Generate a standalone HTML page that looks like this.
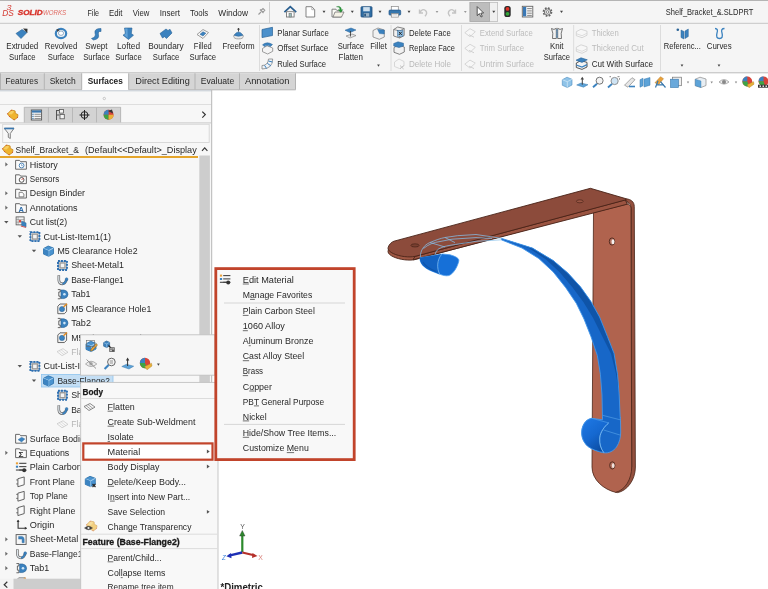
<!DOCTYPE html>
<html><head><meta charset="utf-8"><title>SOLIDWORKS - Shelf_Bracket_&amp;.SLDPRT</title>
<style>html,body{margin:0;padding:0;background:#fff;overflow:hidden}svg{display:block;filter:blur(0.4px)}text{font-family:"Liberation Sans",sans-serif;}</style>
</head><body>
<svg width="768" height="589" viewBox="0 0 768 589">
<rect x="0" y="0" width="768" height="589" fill="#ffffff" />
<rect x="0" y="0" width="768" height="73" fill="#f5f5f5" />
<line x1="0" y1="0.5" x2="768" y2="0.5" stroke="#b4b4b4" stroke-width="1"/>
<line x1="0" y1="23.3" x2="768" y2="23.3" stroke="#c6c6c6" stroke-width="1"/>
<line x1="0" y1="72.8" x2="768" y2="72.8" stroke="#bdbdbd" stroke-width="1"/>
<line x1="269.5" y1="2" x2="269.5" y2="23" stroke="#cfcfcf" stroke-width="1"/>
<text x="2.3" y="16.0" font-size="8.8" fill="#d43a32" textLength="11.5" lengthAdjust="spacingAndGlyphs" font-style="italic">DS</text>
<text x="6.6" y="9.6" font-size="7.6" fill="#d43a32" textLength="5.0" lengthAdjust="spacingAndGlyphs" font-style="italic">3</text>
<text x="17.7" y="14.7" font-size="7.7" fill="#d8322a" font-weight="bold" textLength="25.0" lengthAdjust="spacingAndGlyphs" font-style="italic" stroke="#d8322a" stroke-width="0.35">SOLID</text>
<text x="43.0" y="14.7" font-size="7.7" fill="#e06a62" textLength="23.2" lengthAdjust="spacingAndGlyphs" font-style="italic">WORKS</text>
<text x="87.5" y="16.0" font-size="8.8" fill="#282828" textLength="11.5" lengthAdjust="spacingAndGlyphs" >File</text>
<text x="109.0" y="16.0" font-size="8.8" fill="#282828" textLength="13.5" lengthAdjust="spacingAndGlyphs" >Edit</text>
<text x="132.7" y="16.0" font-size="8.8" fill="#282828" textLength="16.6" lengthAdjust="spacingAndGlyphs" >View</text>
<text x="159.7" y="16.0" font-size="8.8" fill="#282828" textLength="20.3" lengthAdjust="spacingAndGlyphs" >Insert</text>
<text x="190.0" y="16.0" font-size="8.8" fill="#282828" textLength="18.3" lengthAdjust="spacingAndGlyphs" >Tools</text>
<text x="218.3" y="16.0" font-size="8.8" fill="#282828" textLength="29.7" lengthAdjust="spacingAndGlyphs" >Window</text>
<path d="M258.5,14.5 L261,12 M260,9.5 L263.5,13 M261,10.5 L263,8.5 L264.8,10.3 L262.8,12.3" fill="none" stroke="#999" stroke-width="1.1" />
<path d="M284.4,12.2 L290.3,6.7 L296.2,12.2" fill="none" stroke="#2a5f90" stroke-width="1.8" />
<rect x="286.5" y="11.7" width="7.6" height="5.3" fill="#fdfdfd" stroke="#777" stroke-width="0.9" />
<rect x="289.0" y="13.3" width="2.6" height="3.7" fill="#9bb" stroke="#666" stroke-width="0.5" />
<path d="M306,6.7 L311.8,6.7 L314.7,9.7 L314.7,17.0 L306,17.0 Z" fill="#ffffff" stroke="#777" stroke-width="0.9" />
<path d="M311.8,6.7 L311.8,9.7 L314.7,9.7" fill="none" stroke="#999" stroke-width="0.7" />
<path d="M322.5,10.85 L325.5,10.85 L324,13.1 Z" fill="#444" />
<path d="M332,9.2 L336,9.2 L337,10.7 L341.5,10.7 L341.5,17.0 L332,17.0 Z" fill="#fbfbf6" stroke="#777" stroke-width="0.9" />
<path d="M333,17.0 L335,12.0 L344,12.0 L341.5,17.0 Z" fill="#f4f1e6" stroke="#777" stroke-width="0.8" />
<path d="M336.5,6.7 Q340,6.2 340,9.7 L338.3,9.7 L340.6,12.3 L342.8,9.7 L341.3,9.7 Q341.3,5.5 336.5,6.7 Z" fill="#2a9a3a" stroke="#1d7a2a" stroke-width="0.4" />
<path d="M350.8,10.85 L353.8,10.85 L352.3,13.1 Z" fill="#444" />
<rect x="361" y="6.7" width="11" height="10.3" fill="#2f6ea5" stroke="#1f4d7a" stroke-width="0.8" rx="0.8"/>
<rect x="363.2" y="7.1000000000000005" width="6.6" height="4.2" fill="#cfe0ee" />
<rect x="363.5" y="12.9" width="6" height="4" fill="#9ab4c9" stroke="#1f4d7a" stroke-width="0.4" />
<rect x="364.3" y="13.7" width="1.6" height="2.6" fill="#1f4d7a" />
<path d="M378.5,10.85 L381.5,10.85 L380,13.1 Z" fill="#444" />
<rect x="391.3" y="6.5" width="7" height="4" fill="#ffffff" stroke="#888" stroke-width="0.7" />
<rect x="389" y="10.1" width="11.7" height="5" fill="#3576ad" stroke="#25588a" stroke-width="0.7" rx="1"/>
<rect x="391.3" y="13.5" width="7" height="3.6" fill="#ffffff" stroke="#888" stroke-width="0.7" />
<line x1="392.3" y1="14.9" x2="397.3" y2="14.9" stroke="#999" stroke-width="0.6"/>
<path d="M407.5,10.85 L410.5,10.85 L409,13.1 Z" fill="#444" />
<path d="M419.5,9.5 L419.5,13 L423,13 M419.7,12.8 Q422,8 425.5,10.5 Q428,13 425,16.2" fill="none" stroke="#c4c4c4" stroke-width="1.4" />
<path d="M435.6,10.9 L438.4,10.9 L437,13.0 Z" fill="#999" />
<path d="M455.5,9.5 L455.5,13 L452,13 M455.3,12.8 Q453,8 449.5,10.5 Q447,13 450,16.2" fill="none" stroke="#c4c4c4" stroke-width="1.4" />
<path d="M463.90000000000003,10.9 L466.7,10.9 L465.3,13.0 Z" fill="#999" />
<rect x="470" y="2.5" width="27.6" height="19" fill="#f0f0f0" stroke="#bdbdbd" stroke-width="0.8" />
<rect x="470" y="2.5" width="19.6" height="19" fill="#bdbdbd" stroke="#ababab" stroke-width="0.8" />
<path d="M477.2,6.6 L477.2,15.6 L479.4,13.6 L481,17 L482.3,16.4 L480.8,13.1 L483.6,13 Z" fill="#ffffff" stroke="#333" stroke-width="0.8" />
<path d="M492.3,10.85 L495.3,10.85 L493.8,13.1 Z" fill="#444" />
<rect x="504.3" y="6" width="6.4" height="11" fill="#2a2a2a" rx="2.6"/>
<circle cx="507.5" cy="8.9" r="1.9" fill="#e03328"/><circle cx="507.5" cy="13.8" r="1.9" fill="#35a53a"/>
<rect x="522.3" y="6.3" width="10.5" height="10.7" fill="#f8f8f8" stroke="#666" stroke-width="0.9" />
<rect x="523" y="7" width="3.2" height="9.3" fill="#3a78b5" />
<line x1="527.2" y1="8.6" x2="531.8" y2="8.6" stroke="#666" stroke-width="0.8"/>
<line x1="527.2" y1="10.9" x2="531.8" y2="10.9" stroke="#666" stroke-width="0.8"/>
<line x1="527.2" y1="13.2" x2="531.8" y2="13.2" stroke="#666" stroke-width="0.8"/>
<line x1="527.2" y1="15.4" x2="531.8" y2="15.4" stroke="#666" stroke-width="0.8"/>
<circle cx="547.5" cy="12" r="3.9" fill="none" stroke="#666" stroke-width="1.9" stroke-dasharray="1.7 1.36"/><circle cx="547.5" cy="12" r="3.1" fill="#f5f5f5" stroke="#666" stroke-width="0.9"/><circle cx="547.5" cy="12" r="1.4" fill="none" stroke="#666" stroke-width="0.8"/>
<path d="M560.0,10.85 L563.0,10.85 L561.5,13.1 Z" fill="#444" />
<text x="665.8" y="15.3" font-size="8.8" fill="#282828" textLength="87.5" lengthAdjust="spacingAndGlyphs" >Shelf_Bracket_&amp;.SLDPRT</text>
<text x="6.3" y="48.8" font-size="8.8" fill="#282828" textLength="32.0" lengthAdjust="spacingAndGlyphs" >Extruded</text>
<text x="9.1" y="60.1" font-size="8.8" fill="#282828" textLength="26.5" lengthAdjust="spacingAndGlyphs" >Surface</text>
<text x="44.8" y="48.8" font-size="8.8" fill="#282828" textLength="32.5" lengthAdjust="spacingAndGlyphs" >Revolved</text>
<text x="47.8" y="60.1" font-size="8.8" fill="#282828" textLength="26.5" lengthAdjust="spacingAndGlyphs" >Surface</text>
<text x="85.3" y="48.8" font-size="8.8" fill="#282828" textLength="22.2" lengthAdjust="spacingAndGlyphs" >Swept</text>
<text x="83.2" y="60.1" font-size="8.8" fill="#282828" textLength="26.5" lengthAdjust="spacingAndGlyphs" >Surface</text>
<text x="117.0" y="48.8" font-size="8.8" fill="#282828" textLength="23.0" lengthAdjust="spacingAndGlyphs" >Lofted</text>
<text x="115.2" y="60.1" font-size="8.8" fill="#282828" textLength="26.5" lengthAdjust="spacingAndGlyphs" >Surface</text>
<text x="148.2" y="48.8" font-size="8.8" fill="#282828" textLength="35.5" lengthAdjust="spacingAndGlyphs" >Boundary</text>
<text x="152.8" y="60.1" font-size="8.8" fill="#282828" textLength="26.5" lengthAdjust="spacingAndGlyphs" >Surface</text>
<text x="193.8" y="48.8" font-size="8.8" fill="#282828" textLength="18.0" lengthAdjust="spacingAndGlyphs" >Filled</text>
<text x="189.6" y="60.1" font-size="8.8" fill="#282828" textLength="26.5" lengthAdjust="spacingAndGlyphs" >Surface</text>
<text x="222.5" y="48.8" font-size="8.8" fill="#282828" textLength="32.2" lengthAdjust="spacingAndGlyphs" >Freeform</text>
<path d="M16,33.5 L22,29.5 L27,32.5 L21,38.5 Z" fill="#3b82bf" stroke="#2a6396" stroke-width="0.6" />
<path d="M23,28.5 L27.5,28.8 L27.3,33.0 Z" fill="#333" />
<ellipse cx="61.0" cy="33.5" rx="5.2" ry="4.6" fill="none" stroke="#3b82bf" stroke-width="2.2"/>
<ellipse cx="61.0" cy="33.2" rx="2.6" ry="2.2" fill="#fff" stroke="#2a6396" stroke-width="0.5"/>
<path d="M56.5,29 L60.0,29.5 L57.5,32 Z" fill="#444" />
<path d="M91.5,38.5 Q96.5,37 95.0,33 Q94.0,28.5 101.0,28.5 L101.0,31.5 Q97.5,31 98.5,34.5 Q99.5,39 93.5,40 Z" fill="#3b82bf" stroke="#2a6396" stroke-width="0.6" />
<path d="M124.5,28 L132.0,28 L131.3,33.5 L133.5,35.2 L128.5,39.5 L123.0,35.2 L125.3,33.5 Z" fill="#3b82bf" stroke="#2a6396" stroke-width="0.6" />
<path d="M125.1,28.6 L127.5,28.6 L127.7,38 L124.1,35 L125.9,33.6 Z" fill="#62a3d8" />
<path d="M160,33.5 L166,29.0 L168,30.5 L170,29.3 L172,33.0 L166.5,38.5 L164.5,36.7 L162.5,38.0 Z" fill="#3b82bf" stroke="#2a6396" stroke-width="0.6" />
<path d="M197,34.5 L203,29.5 L208.5,32.5 L203,38.5 Z" fill="#f4f4f4" stroke="#888" stroke-width="0.8" />
<path d="M200,34.3 L203,31.8 L205.8,33.2 L203,36 Z" fill="#3b82bf" stroke="#2a6396" stroke-width="0.5" />
<ellipse cx="238.5" cy="36.3" rx="4.8" ry="2.6" fill="#e9e9e9" stroke="#888" stroke-width="0.7"/>
<path d="M234.1,35.3 Q238.5,28.5 242.9,35.3 Q238.5,37.3 234.1,35.3 Z" fill="#3b82bf" stroke="#2a6396" stroke-width="0.5" />
<line x1="238.5" y1="28" x2="238.5" y2="31.5" stroke="#333" stroke-width="0.9"/>
<line x1="237.2" y1="29.2" x2="239.8" y2="29.2" stroke="#333" stroke-width="0.8"/>
<line x1="259.5" y1="25" x2="259.5" y2="71" stroke="#dcdcdc" stroke-width="1"/>
<line x1="391" y1="25" x2="391" y2="71" stroke="#dcdcdc" stroke-width="1"/>
<line x1="461.5" y1="25" x2="461.5" y2="71" stroke="#dcdcdc" stroke-width="1"/>
<line x1="573.7" y1="25" x2="573.7" y2="71" stroke="#dcdcdc" stroke-width="1"/>
<line x1="660.5" y1="25" x2="660.5" y2="71" stroke="#dcdcdc" stroke-width="1"/>
<text x="277.3" y="35.7" font-size="8.8" fill="#282828" textLength="51.5" lengthAdjust="spacingAndGlyphs" >Planar Surface</text>
<text x="277.3" y="51.3" font-size="8.8" fill="#282828" textLength="51.0" lengthAdjust="spacingAndGlyphs" >Offset Surface</text>
<text x="277.3" y="67.1" font-size="8.8" fill="#282828" textLength="48.7" lengthAdjust="spacingAndGlyphs" >Ruled Surface</text>
<path d="M262,29.5 L272.5,27.3 L272.5,35.5 L262,37.6 Z" fill="#4b90cb" stroke="#2a6396" stroke-width="0.7" />
<path d="M262.5,48.5 L267,45.7 L272.7,48 L272.7,51.3 L267.7,54 L262.5,51.7 Z" fill="#f4f4f4" stroke="#777" stroke-width="0.7" />
<path d="M262.5,44.8 Q267,41 272.5,44.5 L270.5,46.5 Q267,44.2 264.3,46.6 Z" fill="#3b82bf" stroke="#2a6396" stroke-width="0.5" />
<path d="M262,69 L262,65.5 Q268,65.5 268.5,59 L272.7,59 Q272.5,69 262,69 Z" fill="#eef3f8" stroke="#777" stroke-width="0.7" />
<path d="M264.5,65.3 L266.7,68.6 M267.3,63.3 L270.8,65.8 M268.4,61 L272.5,62" fill="none" stroke="#3b82bf" stroke-width="1" />
<text x="337.7" y="48.8" font-size="8.8" fill="#282828" textLength="26.3" lengthAdjust="spacingAndGlyphs" >Surface</text>
<text x="338.6" y="60.1" font-size="8.8" fill="#282828" textLength="24.4" lengthAdjust="spacingAndGlyphs" >Flatten</text>
<path d="M345,30.2 L351,28 L356,30 L350,32.6 Z" fill="#3b82bf" stroke="#2a6396" stroke-width="0.5" />
<path d="M346,36 L352,34 L356,35.6 L350,38 Z" fill="#e8e8e8" stroke="#777" stroke-width="0.6" />
<line x1="350.5" y1="31" x2="350.5" y2="36.5" stroke="#333" stroke-width="0.8"/>
<text x="370.3" y="48.8" font-size="8.8" fill="#282828" textLength="16.6" lengthAdjust="spacingAndGlyphs" >Fillet</text>
<path d="M373,30.5 L378,28 L384.3,30 L384.3,37 L379.3,39.3 L373,37 Z" fill="#f1f1f1" stroke="#777" stroke-width="0.7" />
<path d="M377.5,29.3 L384.3,30 L384.3,34 L379.5,33.6 Z" fill="#3b82bf" stroke="#2a6396" stroke-width="0.4" />
<path d="M377.1,64.6 L379.9,64.6 L378.5,66.7 Z" fill="#444" />
<path d="M393.7,29.5 L397.7,27 L404.2,28.5 L404.2,35.5 L399.7,38 L393.7,36 Z" fill="#f1f1f1" stroke="#666" stroke-width="0.8" />
<path d="M393.7,29.5 L399.7,31 L404.2,28.5 M399.7,31 L399.7,38" fill="none" stroke="#666" stroke-width="0.7" />
<rect x="397.6" y="30.6" width="5.4" height="5.6" fill="#8fbfe4" stroke="#2a6396" stroke-width="0.5" />
<path d="M398.8,31.8 L401.8,35 M401.8,31.8 L398.8,35" fill="none" stroke="#222" stroke-width="1" />
<path d="M394,47.5 L398.5,45 L404.3,47 L404.3,52 L399.5,54.3 L394,52.3 Z" fill="#f1f1f1" stroke="#666" stroke-width="0.8" />
<path d="M393.7,43.5 L398,41.8 L403.5,43.2 L403.5,46 L399,47.6 L393.7,46 Z" fill="#3b82bf" stroke="#2a6396" stroke-width="0.5" />
<text x="409.0" y="35.7" font-size="8.8" fill="#282828" textLength="41.7" lengthAdjust="spacingAndGlyphs" >Delete Face</text>
<text x="409.0" y="51.3" font-size="8.8" fill="#282828" textLength="45.8" lengthAdjust="spacingAndGlyphs" >Replace Face</text>
<text x="409.0" y="67.1" font-size="8.8" fill="#b9b9b9" textLength="42.0" lengthAdjust="spacingAndGlyphs" >Delete Hole</text>
<path d="M394.5,62 L399,59 L404,61.5 L404,66 L399.5,68.5 L394.5,66.5 Z" fill="#f6f6f6" stroke="#cfcfcf" stroke-width="0.8" />
<path d="M400,65.5 L403.6,69 M403.6,65.5 L400,69" fill="none" stroke="#c4c4c4" stroke-width="1" />
<text x="479.8" y="35.7" font-size="8.8" fill="#bcbcbc" textLength="53.0" lengthAdjust="spacingAndGlyphs" >Extend Surface</text>
<path d="M464.8,32.7 L470,28.700000000000003 L475.3,31.700000000000003 L470,36.7 Z" fill="#f7f7f7" stroke="#cdcdcd" stroke-width="0.8" />
<path d="M469,34.7 L474,37.2" fill="none" stroke="#d0d0d0" stroke-width="1" />
<text x="479.8" y="51.3" font-size="8.8" fill="#bcbcbc" textLength="44.2" lengthAdjust="spacingAndGlyphs" >Trim Surface</text>
<path d="M464.8,48.3 L470,44.3 L475.3,47.3 L470,52.3 Z" fill="#f7f7f7" stroke="#cdcdcd" stroke-width="0.8" />
<path d="M469,50.3 L474,52.8" fill="none" stroke="#d0d0d0" stroke-width="1" />
<text x="479.8" y="67.1" font-size="8.8" fill="#bcbcbc" textLength="54.2" lengthAdjust="spacingAndGlyphs" >Untrim Surface</text>
<path d="M464.8,64.1 L470,60.099999999999994 L475.3,63.099999999999994 L470,68.1 Z" fill="#f7f7f7" stroke="#cdcdcd" stroke-width="0.8" />
<path d="M469,66.1 L474,68.6" fill="none" stroke="#d0d0d0" stroke-width="1" />
<text x="549.9" y="48.8" font-size="8.8" fill="#282828" textLength="13.7" lengthAdjust="spacingAndGlyphs" >Knit</text>
<text x="543.8" y="60.1" font-size="8.8" fill="#282828" textLength="26.1" lengthAdjust="spacingAndGlyphs" >Surface</text>
<path d="M551.5,28.5 Q554,30.5 556.3,28.3 L556.3,38.5 L552.5,38.5 Q553.6,33 551.5,28.5 Z" fill="#f3f3f3" stroke="#555" stroke-width="0.8" />
<path d="M562.5,28.5 Q560,30.5 557.7,28.3 L557.7,38.5 L561.5,38.5 Q560.4,33 562.5,28.5 Z" fill="#f3f3f3" stroke="#555" stroke-width="0.8" />
<path d="M557,29.5 L557,38" fill="none" stroke="#3b82bf" stroke-width="1.3" stroke-dasharray="1.2 0.8"/>
<text x="591.7" y="35.7" font-size="8.8" fill="#bcbcbc" textLength="27.0" lengthAdjust="spacingAndGlyphs" >Thicken</text>
<text x="591.7" y="51.3" font-size="8.8" fill="#bcbcbc" textLength="52.0" lengthAdjust="spacingAndGlyphs" >Thickened Cut</text>
<text x="591.7" y="67.1" font-size="8.8" fill="#282828" textLength="61.3" lengthAdjust="spacingAndGlyphs" >Cut With Surface</text>
<path d="M576.3,31.700000000000003 L581,29.200000000000003 L587,31.200000000000003 L587,35.2 L582,37.7 L576.3,35.7 Z" fill="#f7f7f7" stroke="#cdcdcd" stroke-width="0.8" />
<path d="M576.3,33.7 L582,35.7 L587,33.2" fill="none" stroke="#d6d6d6" stroke-width="0.8" />
<path d="M576.3,47.3 L581,44.8 L587,46.8 L587,50.8 L582,53.3 L576.3,51.3 Z" fill="#f7f7f7" stroke="#cdcdcd" stroke-width="0.8" />
<path d="M576.3,49.3 L582,51.3 L587,48.8" fill="none" stroke="#d6d6d6" stroke-width="0.8" />
<path d="M576.3,63 L581,60.6 L587,62.4 L587,67 L582,69.4 L576.3,67.5 Z" fill="#f3f3f3" stroke="#444" stroke-width="0.9" />
<path d="M576,60.2 L581,57.8 L587.3,59.8 L582,62.4 Z" fill="#3b82bf" stroke="#2a6396" stroke-width="0.6" />
<path d="M576.3,65 L582,67 L587,64.6" fill="none" stroke="#3b82bf" stroke-width="1.2" />
<text x="663.8" y="48.8" font-size="8.8" fill="#282828" textLength="37.0" lengthAdjust="spacingAndGlyphs" >Referenc...</text>
<text x="706.7" y="48.8" font-size="8.8" fill="#282828" textLength="25.0" lengthAdjust="spacingAndGlyphs" >Curves</text>
<path d="M681,30 L684,31.5 L684,39 L681,37.5 Z M685,31 L688.3,29 L688.3,36.5 L685,38.5 Z" fill="#3b82bf" stroke="#2a6396" stroke-width="0.5" />
<circle cx="677.8" cy="29.7" r="1.3" fill="#2a6396"/>
<path d="M715,28.5 Q718.5,28.5 717,33 Q715.5,38.5 719.5,38.5 Q723.5,38.5 722,33 Q720.5,28.5 724.5,28.5" fill="none" stroke="#3b82bf" stroke-width="1.3" />
<path d="M680.6,64.6 L683.4,64.6 L682,66.7 Z" fill="#444" />
<path d="M717.6,64.6 L720.4,64.6 L719,66.7 Z" fill="#444" />
<rect x="0" y="73.3" width="295.7" height="16.3" fill="#d5d5d5" />
<rect x="82" y="73.3" width="46.5" height="17" fill="#ffffff" />
<line x1="0.5" y1="73.3" x2="0.5" y2="89.6" stroke="#b3b3b3" stroke-width="1"/>
<line x1="44.3" y1="73.3" x2="44.3" y2="89.6" stroke="#b3b3b3" stroke-width="1"/>
<line x1="81.7" y1="73.3" x2="81.7" y2="89.6" stroke="#b3b3b3" stroke-width="1"/>
<line x1="128.7" y1="73.3" x2="128.7" y2="89.6" stroke="#b3b3b3" stroke-width="1"/>
<line x1="195" y1="73.3" x2="195" y2="89.6" stroke="#b3b3b3" stroke-width="1"/>
<line x1="239.5" y1="73.3" x2="239.5" y2="89.6" stroke="#b3b3b3" stroke-width="1"/>
<line x1="295.5" y1="73.3" x2="295.5" y2="89.6" stroke="#b3b3b3" stroke-width="1"/>
<line x1="0" y1="89.8" x2="82" y2="89.8" stroke="#b3b3b3" stroke-width="1"/>
<line x1="128.5" y1="89.8" x2="295.7" y2="89.8" stroke="#b3b3b3" stroke-width="1"/>
<text x="5.5" y="84.2" font-size="8.8" fill="#282828" textLength="32.5" lengthAdjust="spacingAndGlyphs" >Features</text>
<text x="49.7" y="84.2" font-size="8.8" fill="#282828" textLength="26.0" lengthAdjust="spacingAndGlyphs" >Sketch</text>
<text x="87.8" y="84.2" font-size="8.8" fill="#222" font-weight="bold" textLength="35.0" lengthAdjust="spacingAndGlyphs" >Surfaces</text>
<text x="135.3" y="84.2" font-size="8.8" fill="#282828" textLength="54.5" lengthAdjust="spacingAndGlyphs" >Direct Editing</text>
<text x="200.7" y="84.2" font-size="8.8" fill="#282828" textLength="33.5" lengthAdjust="spacingAndGlyphs" >Evaluate</text>
<text x="245.0" y="84.2" font-size="8.8" fill="#282828" textLength="44.3" lengthAdjust="spacingAndGlyphs" >Annotation</text>
<path d="M562.3,79.7 L567,77.2 L572,79.3 L572,85.0 L567.3,87.5 L562.3,85.3 Z" fill="#8fc3e8" stroke="#4a8cc0" stroke-width="0.6" />
<path d="M562.3,79.7 L567.3,81.7 L572,79.3 M567.3,81.7 L567.3,87.5" fill="none" stroke="#d6ebf8" stroke-width="0.7" />
<path d="M576.7,85.0 L581,83.0 L588,84.7 L583.5,87.2 Z" fill="#5da3d8" stroke="#3878ad" stroke-width="0.5" />
<line x1="582.3" y1="78.0" x2="582.3" y2="84.7" stroke="#444" stroke-width="1"/>
<path d="M580.6,79.5 L582.3,76.7 L584,79.5 Z" fill="#444" />
<circle cx="599.6" cy="80.7" r="3.5" fill="#f4f4f4" stroke="#777" stroke-width="1"/>
<line x1="597" y1="83.7" x2="593" y2="87.3" stroke="#3b82bf" stroke-width="1.9"/>
<circle cx="614.6" cy="81.0" r="3.6" fill="#cfe4f4" stroke="#888" stroke-width="0.9"/>
<line x1="612" y1="83.9" x2="608" y2="87.5" stroke="#3b82bf" stroke-width="1.9"/>
<path d="M609.5,76.7 L611,76.7 M617.5,76.7 L619.5,76.7 M619.5,78.2 L619.5,79.7" fill="none" stroke="#777" stroke-width="0.9" />
<path d="M624.5,85.2 L632,77.7 L635,79.7 L628,87.2 Z" fill="#e6e6e6" stroke="#888" stroke-width="0.7" />
<path d="M629,86.5 L635,86.5" fill="none" stroke="#3b82bf" stroke-width="1.6" />
<path d="M640,79.7 L643,78.2 L643,85.7 L640,87.2 Z M644,79.2 L650,77.5 L650,85.2 L644,87.0 Z" fill="#5da3d8" stroke="#3878ad" stroke-width="0.5" />
<path d="M655,82.7 L660.5,76.7 L663.5,78.7 L658.5,84.7 Z" fill="#e9a13a" stroke="#b87a25" stroke-width="0.5" />
<path d="M658,80.7 L655.5,87.5 M660.5,81.7 L665.5,87.5 M657,84.9 L664,84.9" fill="none" stroke="#3878ad" stroke-width="1.2" />
<rect x="672.5" y="77.2" width="9" height="8.5" fill="#f0f0f0" stroke="#777" stroke-width="0.7" />
<rect x="670.5" y="79.2" width="8" height="8.3" fill="#6aa9db" stroke="#3878ad" stroke-width="0.6" />
<path d="M686.8,81.60000000000001 L689.2,81.60000000000001 L688,83.4 Z" fill="#888" />
<path d="M695.3,79.2 L700,77.2 L706,79.0 L706,85.5 L701,87.5 L695.3,85.7 Z" fill="#e8eef3" stroke="#8b8b8b" stroke-width="0.7" />
<path d="M695.3,79.2 L701,81.0 L701,87.5 L695.3,85.7 Z" fill="#5da3d8" stroke="#3878ad" stroke-width="0.4" />
<path d="M710.5,81.60000000000001 L712.9000000000001,81.60000000000001 L711.7,83.4 Z" fill="#888" />
<path d="M719,82.0 Q724,77.2 729,82.0 Q724,86.2 719,82.0 Z" fill="#ececec" stroke="#9a9a9a" stroke-width="0.8" />
<circle cx="724" cy="81.9" r="2" fill="#888"/>
<path d="M734.8,81.60000000000001 L737.2,81.60000000000001 L736,83.4 Z" fill="#888" />
<circle cx="747.3" cy="81.5" r="4.9" fill="#d9433a"/>
<path d="M747.3,81.5 L747.3,76.60000000000001 A4.9,4.9 0 0 0 742.4,81.5 Z" fill="#3b82bf" />
<path d="M747.3,81.5 L742.4,81.5 A4.9,4.9 0 0 0 749,86.10000000000001 Z" fill="#3da445" />
<path d="M747,84.7 L753.5,81.7 L754,84.2 L749,87.7 Z" fill="#e9b23a" stroke="#a97a1f" stroke-width="0.4" />
<circle cx="763.5" cy="81.3" r="4.9" fill="#d9433a"/>
<path d="M763.5,81.3 L763.5,76.4 A4.9,4.9 0 0 0 758.6,81.3 Z" fill="#3b82bf" />
<path d="M763.5,81.3 L758.6,81.3 A4.9,4.9 0 0 0 765,86.0 Z" fill="#3da445" />
<rect x="758" y="84.7" width="10" height="3" fill="#333" />
<rect x="759.5" y="85.5" width="1.5" height="1.4" fill="#eee" />
<rect x="762.5" y="85.5" width="1.5" height="1.4" fill="#eee" />
<rect x="765.5" y="85.5" width="1.5" height="1.4" fill="#eee" />
<rect x="0" y="90.3" width="211.3" height="499" fill="#f7f7f7" />
<line x1="0" y1="90.8" x2="211.3" y2="90.8" stroke="#c3cbd3" stroke-width="1"/>
<line x1="0" y1="104.5" x2="211.3" y2="104.5" stroke="#dedede" stroke-width="1"/>
<line x1="211.7" y1="90" x2="211.7" y2="589" stroke="#b5b5b5" stroke-width="1"/>
<circle cx="104.3" cy="98.5" r="1.2" fill="none" stroke="#b5b5b5" stroke-width="0.7"/>
<rect x="24.3" y="107" width="96.3" height="15.7" fill="#d3d3d3" />
<line x1="24.3" y1="107" x2="24.3" y2="122.7" stroke="#b8b8b8" stroke-width="1"/>
<line x1="48.4" y1="107" x2="48.4" y2="122.7" stroke="#b8b8b8" stroke-width="1"/>
<line x1="72.5" y1="107" x2="72.5" y2="122.7" stroke="#b8b8b8" stroke-width="1"/>
<line x1="96.5" y1="107" x2="96.5" y2="122.7" stroke="#b8b8b8" stroke-width="1"/>
<line x1="120.6" y1="107" x2="120.6" y2="122.7" stroke="#b8b8b8" stroke-width="1"/>
<line x1="24.3" y1="107.3" x2="120.6" y2="107.3" stroke="#bdbdbd" stroke-width="1"/>
<line x1="0" y1="122.9" x2="211.3" y2="122.9" stroke="#c9c9c9" stroke-width="1"/>
<path d="M7.5,113.8 L11.3,110.0 L15.1,110.9 L15.3,113.3 L18,114.7 L17.5,117.6 L14.1,120.0 L9.4,116.6 Z" fill="#efb42f" stroke="#c9871a" stroke-width="0.8" stroke-linejoin="round"/>
<path d="M8.2,113.9 L11.4,110.8 L14.4,111.5 L11.6,114.5 Z" fill="#f7cf63" />
<path d="M11.6,114.7 L(15,),113.7 L17.2,115.0 L(14,),118.1 Z" fill="#f4c650" />
<circle cx="7.7" cy="113.8" r="0.55" fill="#d24a2a"/>
<circle cx="11.3" cy="110.3" r="0.55" fill="#d24a2a"/>
<circle cx="14.1" cy="119.6" r="0.55" fill="#d24a2a"/>
<circle cx="17.5" cy="117.3" r="0.55" fill="#d24a2a"/>
<circle cx="9.6" cy="116.5" r="0.55" fill="#d24a2a"/>
<rect x="31.3" y="110" width="10.3" height="10" fill="#f4f4f4" stroke="#555" stroke-width="0.9" />
<rect x="31.8" y="110.4" width="9.4" height="2.2" fill="#3b78b0" />
<line x1="34.5" y1="114.3" x2="40.8" y2="114.3" stroke="#666" stroke-width="0.7"/>
<rect x="32.3" y="113.7" width="1.3" height="1.2" fill="#3b78b0" />
<line x1="34.5" y1="116.4" x2="40.8" y2="116.4" stroke="#666" stroke-width="0.7"/>
<rect x="32.3" y="115.80000000000001" width="1.3" height="1.2" fill="#3b78b0" />
<line x1="34.5" y1="118.5" x2="40.8" y2="118.5" stroke="#666" stroke-width="0.7"/>
<rect x="32.3" y="117.9" width="1.3" height="1.2" fill="#3b78b0" />
<path d="M56.5,110 L56.5,120 M56.5,110.5 L59.5,110.5 M56.5,115 L59.5,115" fill="none" stroke="#555" stroke-width="1" />
<rect x="59.5" y="109.5" width="4" height="3.6" fill="#f4f4f4" stroke="#555" stroke-width="0.8" />
<rect x="60" y="114.5" width="4.3" height="4.3" fill="#f4f4f4" stroke="#555" stroke-width="0.8" />
<circle cx="84.5" cy="115" r="3.4" fill="none" stroke="#222" stroke-width="1"/>
<path d="M79.5,115 L89.5,115 M84.5,110 L84.5,120" fill="none" stroke="#222" stroke-width="1" />
<circle cx="108.6" cy="114.8" r="5" fill="#d9433a"/>
<path d="M108.6,114.8 L108.6,109.8 A5,5 0 0 0 103.6,114.8 Z" fill="#3b82bf" />
<path d="M108.6,114.8 L103.6,114.8 A5,5 0 0 0 108.6,119.8 Z" fill="#3da445" />
<path d="M108.6,114.8 L108.6,119.8 A5,5 0 0 0 113.6,114.8 Z" fill="#e9b23a" />
<path d="M108,111 L113,113.5 L112,109.5 Z" fill="#333" />
<path d="M202.3,111.6 L205.3,114.6 L202.3,117.6" fill="none" stroke="#333" stroke-width="1.2" />
<rect x="2.7" y="124.3" width="206.5" height="18.2" fill="#f8f8f8" stroke="#d6d6d6" stroke-width="0.9" />
<path d="M4.3,128.3 L14,128.3 L10.3,133.5 L10.3,138.5 L8.3,137.3 L8.3,133.5 Z" fill="#f0f0f0" stroke="#666" stroke-width="0.8" />
<rect x="4.3" y="127.7" width="9.7" height="1.6" fill="#3b78b0" />
<path d="M2.5,148.8 L6.3,145.0 L10.1,145.9 L10.3,148.3 L13,149.7 L12.5,152.6 L9.1,155.0 L4.4,151.6 Z" fill="#efb42f" stroke="#c9871a" stroke-width="0.8" stroke-linejoin="round"/>
<path d="M3.2,148.9 L6.4,145.8 L9.4,146.5 L6.6,149.5 Z" fill="#f7cf63" />
<path d="M6.6,149.7 L(10,),148.7 L12.2,150.0 L(9,),153.1 Z" fill="#f4c650" />
<circle cx="2.7" cy="148.8" r="0.55" fill="#d24a2a"/>
<circle cx="6.3" cy="145.3" r="0.55" fill="#d24a2a"/>
<circle cx="9.1" cy="154.6" r="0.55" fill="#d24a2a"/>
<circle cx="12.5" cy="152.3" r="0.55" fill="#d24a2a"/>
<circle cx="4.6" cy="151.5" r="0.55" fill="#d24a2a"/>
<text x="15.5" y="153.0" font-size="9.2" fill="#282828" textLength="63.3" lengthAdjust="spacingAndGlyphs" >Shelf_Bracket_&amp;</text>
<text x="85.0" y="153.0" font-size="9.2" fill="#282828" textLength="111.7" lengthAdjust="spacingAndGlyphs" >(Default&lt;&lt;Default&gt;_Display</text>
<path d="M202,150.8 L204.7,147.8 L207.4,150.8" fill="none" stroke="#333" stroke-width="1.1" />
<rect x="0" y="156" width="198" height="2" fill="#e4a52c" />
<rect x="199.3" y="155.5" width="10.6" height="434" fill="#cdcdcd" />
<path d="M5.3,162.3 L7.9,164.4 L5.3,166.5 Z" fill="#6a6a6a" />
<path d="M15.6,160.4 L19.6,160.4 L20.6,161.70000000000002 L26.4,161.70000000000002 L26.4,169.20000000000002 L15.6,169.20000000000002 Z" fill="#fafafa" stroke="#5a5a5a" stroke-width="0.9" />
<circle cx="21.6" cy="165.50000000000003" r="2.4" fill="#fff" stroke="#3b78b0" stroke-width="0.9"/>
<path d="M21.6,164.20000000000002 L21.6,165.70000000000002 L22.8,165.70000000000002" fill="none" stroke="#3b78b0" stroke-width="0.6" />
<text x="29.8" y="167.5" font-size="9.2" fill="#282828" textLength="28.0" lengthAdjust="spacingAndGlyphs" >History</text>
<path d="M15.6,174.82 L19.6,174.82 L20.6,176.12 L26.4,176.12 L26.4,183.62 L15.6,183.62 Z" fill="#fafafa" stroke="#5a5a5a" stroke-width="0.9" />
<circle cx="21.6" cy="179.92000000000002" r="2.4" fill="#fff" stroke="#444" stroke-width="0.9"/>
<path d="M21.6,179.92000000000002 L23.4,178.12" fill="none" stroke="#d9433a" stroke-width="0.9" />
<text x="29.8" y="181.9" font-size="9.2" fill="#282828" textLength="29.5" lengthAdjust="spacingAndGlyphs" >Sensors</text>
<path d="M5.3,191.14000000000001 L7.9,193.24 L5.3,195.34 Z" fill="#6a6a6a" />
<path d="M15.6,189.24 L19.6,189.24 L20.6,190.54000000000002 L26.4,190.54000000000002 L26.4,198.04000000000002 L15.6,198.04000000000002 Z" fill="#fafafa" stroke="#5a5a5a" stroke-width="0.9" />
<path d="M19.1,192.34000000000003 L22.1,192.34000000000003 L23.9,194.04000000000002 L23.9,196.84000000000003 L19.1,196.84000000000003 Z" fill="#fff" stroke="#555" stroke-width="0.7" />
<text x="29.8" y="196.3" font-size="9.2" fill="#282828" textLength="55.2" lengthAdjust="spacingAndGlyphs" >Design Binder</text>
<path d="M5.3,205.56 L7.9,207.66 L5.3,209.76 Z" fill="#6a6a6a" />
<path d="M15.6,203.66 L19.6,203.66 L20.6,204.96 L26.4,204.96 L26.4,212.46 L15.6,212.46 Z" fill="#fafafa" stroke="#5a5a5a" stroke-width="0.9" />
<text x="18.4" y="211.8" font-size="7.5" fill="#2d6cab" font-weight="bold" textLength="5.4" lengthAdjust="spacingAndGlyphs" font-family="Liberation Serif, serif">A</text>
<text x="29.8" y="210.8" font-size="9.2" fill="#282828" textLength="47.7" lengthAdjust="spacingAndGlyphs" >Annotations</text>
<path d="M4.1,220.88000000000002 L8.5,220.88000000000002 L6.3,223.38000000000002 Z" fill="#555" />
<rect x="16.1" y="216.88000000000002" width="8" height="8" fill="#f3f3f3" stroke="#555" stroke-width="0.8" />
<path d="M18.1,216.88000000000002 L18.1,224.88000000000002 M16.1,219.48000000000002 L24.1,219.48000000000002 M16.1,222.18000000000004 L24.1,222.18000000000004" fill="none" stroke="#777" stroke-width="0.5" />
<rect x="18.9" y="220.08" width="2.2" height="2.2" fill="#d9433a" />
<path d="M21.6,220.88000000000002 L26.1,222.88000000000002 L26.1,226.88000000000002 L21.6,225.38000000000002 Z" fill="#3b82bf" stroke="#2a6396" stroke-width="0.4" />
<path d="M20.8,226.08 L26.1,227.48000000000002" fill="none" stroke="#c33" stroke-width="0.8" />
<text x="29.8" y="225.2" font-size="9.2" fill="#282828" textLength="37.3" lengthAdjust="spacingAndGlyphs" >Cut list(2)</text>
<path d="M17.6,235.3 L22.0,235.3 L19.8,237.8 Z" fill="#555" />
<rect x="30.4" y="232.10000000000002" width="9" height="9" fill="#f0f0f0" stroke="#2f6fb0" stroke-width="1.9" stroke-dasharray="1.9 1.1"/>
<rect x="30.599999999999998" y="232.3" width="8.6" height="8.6" fill="none" stroke="#2f6fb0" stroke-width="0.7" />
<rect x="32.4" y="234.10000000000002" width="5" height="5" fill="#f4f4f4" stroke="#9a9a9a" stroke-width="1.4" />
<text x="43.6" y="239.6" font-size="9.2" fill="#282828" textLength="67.3" lengthAdjust="spacingAndGlyphs" >Cut-List-Item1(1)</text>
<path d="M31.8,249.72 L36.2,249.72 L34,252.22 Z" fill="#555" />
<path d="M43.5,248.52 L48.2,246.02 L53.5,248.02 L53.5,253.72 L48.7,256.32 L43.5,254.12 Z" fill="#4a93cf" stroke="#2a6ea8" stroke-width="0.8" />
<path d="M43.5,248.52 L48.7,250.62 L53.5,248.02 M48.7,250.62 L48.7,256.32" fill="none" stroke="#b4d8f2" stroke-width="0.9" />
<path d="M43.800000000000004,248.72 L48.6,250.72 L48.6,256.02 L43.800000000000004,253.92 Z" fill="#3c84c2" />
<text x="57.4" y="254.0" font-size="9.2" fill="#282828" textLength="80.2" lengthAdjust="spacingAndGlyphs" >M5 Clearance Hole2</text>
<rect x="58.00000000000001" y="260.94" width="9" height="9" fill="#f0f0f0" stroke="#2f6fb0" stroke-width="1.9" stroke-dasharray="1.9 1.1"/>
<rect x="58.20000000000001" y="261.14" width="8.6" height="8.6" fill="none" stroke="#2f6fb0" stroke-width="0.7" />
<rect x="60.00000000000001" y="262.94" width="5" height="5" fill="#f4f4f4" stroke="#9a9a9a" stroke-width="1.4" />
<text x="71.2" y="268.4" font-size="9.2" fill="#282828" textLength="52.7" lengthAdjust="spacingAndGlyphs" >Sheet-Metal1</text>
<path d="M58.800000000000004,275.36 L58.800000000000004,280.06 Q59.00000000000001,283.86 62.50000000000001,283.86 Q65.0,283.86 66.60000000000001,279.76" fill="none" stroke="#6a6a6a" stroke-width="2.6" />
<path d="M58.800000000000004,275.76 L58.800000000000004,280.06 Q59.00000000000001,283.86 62.50000000000001,283.86" fill="none" stroke="#dfe6ec" stroke-width="1.2" />
<path d="M62.50000000000001,283.86 Q65.0,283.86 66.60000000000001,279.76" fill="none" stroke="#3b82bf" stroke-width="1.9" />
<circle cx="66.60000000000001" cy="279.16" r="1.4" fill="#3b82bf" stroke="#2a6396" stroke-width="0.4"/>
<text x="71.2" y="282.9" font-size="9.2" fill="#282828" textLength="52.6" lengthAdjust="spacingAndGlyphs" >Base-Flange1</text>
<path d="M57.800000000000004,289.58 L60.300000000000004,289.58 L60.300000000000004,291.97999999999996 L58.800000000000004,291.97999999999996 L58.800000000000004,296.17999999999995 L60.300000000000004,296.17999999999995 L60.300000000000004,298.78 L57.800000000000004,298.78" fill="none" stroke="#444" stroke-width="0.8" />
<path d="M61.00000000000001,289.97999999999996 L64.0,289.97999999999996 Q68.0,290.78 68.0,294.28 Q68.0,297.78 64.0,298.58 L61.00000000000001,298.58 Z" fill="#3b82bf" stroke="#2a6396" stroke-width="0.6" />
<circle cx="64.4" cy="294.28" r="1.3" fill="#cfe6f7"/>
<text x="71.2" y="297.3" font-size="9.2" fill="#282828" textLength="19.4" lengthAdjust="spacingAndGlyphs" >Tab1</text>
<path d="M57.800000000000004,306.2 L60.00000000000001,304.0 L66.60000000000001,304.0 L66.60000000000001,311.4 L64.4,313.7 L57.800000000000004,313.7 Z" fill="#f2f2f2" stroke="#444" stroke-width="0.8" />
<circle cx="62.00000000000001" cy="309.09999999999997" r="2.6" fill="#3b82bf" stroke="#2a6396" stroke-width="0.5"/>
<path d="M63.50000000000001,306.9 L67.0,303.7" fill="none" stroke="#e28a1e" stroke-width="1.4" />
<text x="71.2" y="311.7" font-size="9.2" fill="#282828" textLength="80.1" lengthAdjust="spacingAndGlyphs" >M5 Clearance Hole1</text>
<path d="M57.800000000000004,318.42 L60.300000000000004,318.42 L60.300000000000004,320.82 L58.800000000000004,320.82 L58.800000000000004,325.02 L60.300000000000004,325.02 L60.300000000000004,327.62 L57.800000000000004,327.62" fill="none" stroke="#444" stroke-width="0.8" />
<path d="M61.00000000000001,318.82 L64.0,318.82 Q68.0,319.62 68.0,323.12 Q68.0,326.62 64.0,327.42 L61.00000000000001,327.42 Z" fill="#3b82bf" stroke="#2a6396" stroke-width="0.6" />
<circle cx="64.4" cy="323.12" r="1.3" fill="#cfe6f7"/>
<text x="71.2" y="326.1" font-size="9.2" fill="#282828" textLength="19.8" lengthAdjust="spacingAndGlyphs" >Tab2</text>
<path d="M57.800000000000004,335.03999999999996 L60.00000000000001,332.84 L66.60000000000001,332.84 L66.60000000000001,340.23999999999995 L64.4,342.53999999999996 L57.800000000000004,342.53999999999996 Z" fill="#f2f2f2" stroke="#444" stroke-width="0.8" />
<circle cx="62.00000000000001" cy="337.93999999999994" r="2.6" fill="#3b82bf" stroke="#2a6396" stroke-width="0.5"/>
<path d="M63.50000000000001,335.73999999999995 L67.0,332.53999999999996" fill="none" stroke="#e28a1e" stroke-width="1.4" />
<text x="71.2" y="340.5" font-size="9.2" fill="#282828" textLength="80.2" lengthAdjust="spacingAndGlyphs" >M5 Clearance Hole2</text>
<path d="M57.00000000000001,351.66 L63.00000000000001,348.66 L68.0,352.26000000000005 L62.00000000000001,355.66 Z" fill="#f8f8f8" stroke="#c9c9c9" stroke-width="0.8" />
<path d="M59.00000000000001,350.66 L64.0,354.66 M61.00000000000001,349.66 L66.0,353.66" fill="none" stroke="#c9c9c9" stroke-width="0.6" />
<text x="71.2" y="355.0" font-size="9.2" fill="#b5b5b5" textLength="50.0" lengthAdjust="spacingAndGlyphs" >Flat-Pattern1</text>
<path d="M17.6,365.08 L22.0,365.08 L19.8,367.58 Z" fill="#555" />
<rect x="30.4" y="361.88" width="9" height="9" fill="#f0f0f0" stroke="#2f6fb0" stroke-width="1.9" stroke-dasharray="1.9 1.1"/>
<rect x="30.599999999999998" y="362.08" width="8.6" height="8.6" fill="none" stroke="#2f6fb0" stroke-width="0.7" />
<rect x="32.4" y="363.88" width="5" height="5" fill="#f4f4f4" stroke="#9a9a9a" stroke-width="1.4" />
<text x="43.6" y="369.4" font-size="9.2" fill="#282828" textLength="67.3" lengthAdjust="spacingAndGlyphs" >Cut-List-Item2(1)</text>
<rect x="41.5" y="374.4" width="71.5" height="12.6" fill="#c3def4" stroke="#8fc4ee" stroke-width="0.8" />
<path d="M31.8,379.5 L36.2,379.5 L34,382.0 Z" fill="#555" />
<path d="M43.5,378.3 L48.2,375.8 L53.5,377.8 L53.5,383.5 L48.7,386.1 L43.5,383.9 Z" fill="#4a93cf" stroke="#2a6ea8" stroke-width="0.8" />
<path d="M43.5,378.3 L48.7,380.4 L53.5,377.8 M48.7,380.4 L48.7,386.1" fill="none" stroke="#b4d8f2" stroke-width="0.9" />
<path d="M43.800000000000004,378.5 L48.6,380.5 L48.6,385.8 L43.800000000000004,383.7 Z" fill="#3c84c2" />
<text x="57.4" y="383.8" font-size="9.2" fill="#282828" textLength="52.6" lengthAdjust="spacingAndGlyphs" >Base-Flange2</text>
<rect x="58.00000000000001" y="390.72" width="9" height="9" fill="#f0f0f0" stroke="#2f6fb0" stroke-width="1.9" stroke-dasharray="1.9 1.1"/>
<rect x="58.20000000000001" y="390.92" width="8.6" height="8.6" fill="none" stroke="#2f6fb0" stroke-width="0.7" />
<rect x="60.00000000000001" y="392.72" width="5" height="5" fill="#f4f4f4" stroke="#9a9a9a" stroke-width="1.4" />
<text x="71.2" y="398.2" font-size="9.2" fill="#282828" textLength="52.7" lengthAdjust="spacingAndGlyphs" >Sheet-Metal2</text>
<path d="M58.800000000000004,405.14 L58.800000000000004,409.84 Q59.00000000000001,413.64 62.50000000000001,413.64 Q65.0,413.64 66.60000000000001,409.53999999999996" fill="none" stroke="#6a6a6a" stroke-width="2.6" />
<path d="M58.800000000000004,405.53999999999996 L58.800000000000004,409.84 Q59.00000000000001,413.64 62.50000000000001,413.64" fill="none" stroke="#dfe6ec" stroke-width="1.2" />
<path d="M62.50000000000001,413.64 Q65.0,413.64 66.60000000000001,409.53999999999996" fill="none" stroke="#3b82bf" stroke-width="1.9" />
<circle cx="66.60000000000001" cy="408.94" r="1.4" fill="#3b82bf" stroke="#2a6396" stroke-width="0.4"/>
<text x="71.2" y="412.6" font-size="9.2" fill="#282828" textLength="52.6" lengthAdjust="spacingAndGlyphs" >Base-Flange2</text>
<path d="M57.00000000000001,423.76 L63.00000000000001,420.76 L68.0,424.36 L62.00000000000001,427.76 Z" fill="#f8f8f8" stroke="#c9c9c9" stroke-width="0.8" />
<path d="M59.00000000000001,422.76 L64.0,426.76 M61.00000000000001,421.76 L66.0,425.76" fill="none" stroke="#c9c9c9" stroke-width="0.6" />
<text x="71.2" y="427.1" font-size="9.2" fill="#b5b5b5" textLength="50.0" lengthAdjust="spacingAndGlyphs" >Flat-Pattern2</text>
<path d="M15.6,434.38 L19.6,434.38 L20.6,435.68 L26.4,435.68 L26.4,443.18 L15.6,443.18 Z" fill="#fafafa" stroke="#5a5a5a" stroke-width="0.9" />
<path d="M18.1,439.68 L21.6,437.18 L24.9,438.98 L21.6,441.98 Z" fill="#3b82bf" stroke="#2a6396" stroke-width="0.4" />
<text x="29.8" y="441.5" font-size="9.2" fill="#282828" textLength="70.0" lengthAdjust="spacingAndGlyphs" >Surface Bodies(1)</text>
<path d="M5.3,450.69999999999993 L7.9,452.79999999999995 L5.3,454.9 Z" fill="#6a6a6a" />
<path d="M15.6,448.79999999999995 L19.6,448.79999999999995 L20.6,450.09999999999997 L26.4,450.09999999999997 L26.4,457.59999999999997 L15.6,457.59999999999997 Z" fill="#fafafa" stroke="#5a5a5a" stroke-width="0.9" />
<text x="18.6" y="456.8" font-size="7.5" fill="#282828" font-weight="bold" textLength="5.0" lengthAdjust="spacingAndGlyphs" >Σ</text>
<text x="29.8" y="455.9" font-size="9.2" fill="#282828" textLength="39.5" lengthAdjust="spacingAndGlyphs" >Equations</text>
<line x1="19.2" y1="463.32" x2="26.4" y2="463.32" stroke="#444" stroke-width="1.1"/>
<line x1="19.2" y1="466.62" x2="26.4" y2="466.62" stroke="#444" stroke-width="1.1"/>
<line x1="19.2" y1="470.02" x2="26.4" y2="470.02" stroke="#444" stroke-width="1.1"/>
<rect x="15.9" y="462.32" width="2.2" height="2" fill="#e9a13a" />
<rect x="15.9" y="465.71999999999997" width="2.2" height="2" fill="#3b82bf" />
<line x1="15.9" y1="470.02" x2="22.6" y2="470.02" stroke="#444" stroke-width="1.1"/>
<circle cx="24.2" cy="470.32" r="2" fill="#333"/>
<text x="29.8" y="470.3" font-size="9.2" fill="#282828" textLength="75.0" lengthAdjust="spacingAndGlyphs" >Plain Carbon Steel</text>
<path d="M17.9,478.74 L24.2,476.94 L24.2,484.74 L17.9,486.74 Z" fill="#fafafa" stroke="#555" stroke-width="0.9" />
<line x1="16.2" y1="479.94" x2="17.9" y2="479.94" stroke="#555" stroke-width="0.8"/>
<line x1="16.2" y1="483.94" x2="17.9" y2="483.94" stroke="#555" stroke-width="0.8"/>
<text x="29.8" y="484.7" font-size="9.2" fill="#282828" textLength="45.0" lengthAdjust="spacingAndGlyphs" >Front Plane</text>
<path d="M17.9,493.16 L24.2,491.36 L24.2,499.16 L17.9,501.16 Z" fill="#fafafa" stroke="#555" stroke-width="0.9" />
<line x1="16.2" y1="494.36" x2="17.9" y2="494.36" stroke="#555" stroke-width="0.8"/>
<line x1="16.2" y1="498.36" x2="17.9" y2="498.36" stroke="#555" stroke-width="0.8"/>
<text x="29.8" y="499.2" font-size="9.2" fill="#282828" textLength="38.0" lengthAdjust="spacingAndGlyphs" >Top Plane</text>
<path d="M17.9,507.5799999999999 L24.2,505.7799999999999 L24.2,513.5799999999999 L17.9,515.5799999999999 Z" fill="#fafafa" stroke="#555" stroke-width="0.9" />
<line x1="16.2" y1="508.7799999999999" x2="17.9" y2="508.7799999999999" stroke="#555" stroke-width="0.8"/>
<line x1="16.2" y1="512.78" x2="17.9" y2="512.78" stroke="#555" stroke-width="0.8"/>
<text x="29.8" y="513.6" font-size="9.2" fill="#282828" textLength="45.5" lengthAdjust="spacingAndGlyphs" >Right Plane</text>
<path d="M18.1,520.1999999999999 L18.1,528.1999999999999 L26.6,528.1999999999999" fill="none" stroke="#333" stroke-width="1.1" />
<path d="M16.6,522.0999999999999 L18.1,519.6999999999999 L19.6,522.0999999999999 Z M24.799999999999997,526.6999999999999 L27.1,528.1999999999999 L24.799999999999997,529.6999999999999 Z" fill="#333" />
<text x="29.8" y="528.0" font-size="9.2" fill="#282828" textLength="24.5" lengthAdjust="spacingAndGlyphs" >Origin</text>
<path d="M5.3,537.22 L7.9,539.32 L5.3,541.4200000000001 Z" fill="#6a6a6a" />
<rect x="16.1" y="534.62" width="10" height="9.8" fill="#f6f6f6" stroke="#555" stroke-width="0.9" />
<path d="M18.6,536.42 L22.1,536.42 Q24.2,536.72 24.2,539.32 L24.2,542.72 L22.1,542.72 L22.1,539.12 L18.6,539.12 Z" fill="#3b82bf" stroke="#2a6396" stroke-width="0.4" />
<text x="29.8" y="542.4" font-size="9.2" fill="#282828" textLength="48.5" lengthAdjust="spacingAndGlyphs" >Sheet-Metal</text>
<path d="M5.3,551.6399999999999 L7.9,553.7399999999999 L5.3,555.8399999999999 Z" fill="#6a6a6a" />
<path d="M17.4,549.3399999999998 L17.4,554.0399999999998 Q17.6,557.8399999999998 21.1,557.8399999999998 Q23.6,557.8399999999998 25.2,553.7399999999999" fill="none" stroke="#6a6a6a" stroke-width="2.6" />
<path d="M17.4,549.7399999999999 L17.4,554.0399999999998 Q17.6,557.8399999999998 21.1,557.8399999999998" fill="none" stroke="#dfe6ec" stroke-width="1.2" />
<path d="M21.1,557.8399999999998 Q23.6,557.8399999999998 25.2,553.7399999999999" fill="none" stroke="#3b82bf" stroke-width="1.9" />
<circle cx="25.2" cy="553.1399999999999" r="1.4" fill="#3b82bf" stroke="#2a6396" stroke-width="0.4"/>
<text x="29.8" y="556.8" font-size="9.2" fill="#282828" textLength="52.6" lengthAdjust="spacingAndGlyphs" >Base-Flange1</text>
<path d="M5.3,566.06 L7.9,568.16 L5.3,570.26 Z" fill="#6a6a6a" />
<path d="M16.4,563.56 L18.9,563.56 L18.9,565.9599999999999 L17.4,565.9599999999999 L17.4,570.16 L18.9,570.16 L18.9,572.7599999999999 L16.4,572.7599999999999" fill="none" stroke="#444" stroke-width="0.8" />
<path d="M19.6,563.9599999999999 L22.6,563.9599999999999 Q26.6,564.7599999999999 26.6,568.2599999999999 Q26.6,571.7599999999999 22.6,572.56 L19.6,572.56 Z" fill="#3b82bf" stroke="#2a6396" stroke-width="0.6" />
<circle cx="23.0" cy="568.2599999999999" r="1.3" fill="#cfe6f7"/>
<text x="29.8" y="571.3" font-size="9.2" fill="#282828" textLength="19.4" lengthAdjust="spacingAndGlyphs" >Tab1</text>
<path d="M5.3,580.48 L7.9,582.58 L5.3,584.6800000000001 Z" fill="#6a6a6a" />
<path d="M16.4,580.18 L18.6,577.98 L25.2,577.98 L25.2,585.38 L23.0,587.68 L16.4,587.68 Z" fill="#f2f2f2" stroke="#444" stroke-width="0.8" />
<circle cx="20.6" cy="583.08" r="2.6" fill="#3b82bf" stroke="#2a6396" stroke-width="0.5"/>
<path d="M22.1,580.88 L25.6,577.68" fill="none" stroke="#e28a1e" stroke-width="1.4" />
<text x="29.8" y="585.7" font-size="9.2" fill="#282828" textLength="80.1" lengthAdjust="spacingAndGlyphs" >M5 Clearance Hole1</text>
<rect x="0" y="578.7" width="199.3" height="11" fill="#f3f3f3" />
<rect x="13.5" y="578.7" width="186" height="11" fill="#cdcdcd" />
<path d="M7.3,581.8 L4.2,584.7 L7.3,587.6" fill="none" stroke="#333" stroke-width="1.2" />
<path d="M394,241.2 L590.4,188.3 L626.3,198.8 L625.3,200 L415,256.4 C404,258.6 386,253.2 388.2,247.3 C389,244.5 391.5,242 394,241.2 Z" transform="translate(0,3.2)" fill="#9f5743" stroke="#4a2418" stroke-width="0.9" stroke-linejoin="round"/>
<path d="M626.3,198.8 C630.5,199.3 634.3,201.5 634.3,206.5 L635.4,467 C635.4,480 627,491 617.5,492.6 L615,492 L631.7,467 L631,207.5 C630.8,205 629.5,203.3 627.5,202.3 L625.3,200 Z" fill="#93503e" stroke="#4a2418" stroke-width="0.8" />
<path d="M593.5,212.6 L627,204 C629.5,204.3 631,206 631,208.5 L631.7,467 C631.7,479 625,490.5 615.5,492.3 C604,489.5 592,480 592,467 Z" fill="#b0634e" stroke="#4a2418" stroke-width="0.8" />
<path d="M415,256.4 L625.3,199.8 L627.2,204.2 L413,259.8 Z" fill="#9b5441" stroke="#4a2418" stroke-width="0.9" stroke-linejoin="round"/>
<path d="M394,241.2 L590.4,188.3 L626.3,198.8 L625.3,200 L415,256.4 C404,258.6 386,253.2 388.2,247.3 C389,244.5 391.5,242 394,241.2 Z" fill="#8c4b3b" stroke="#4a2418" stroke-width="0.9" stroke-linejoin="round"/>
<path d="M625.3,200 C627.5,201 628.3,202.5 628,204.3" fill="none" stroke="#4a2418" stroke-width="0.6" />
<ellipse cx="415" cy="245.4" rx="4.1" ry="1.6" fill="#7a4031" stroke="#3e1d13" stroke-width="0.6"/>
<ellipse cx="579.8" cy="201.3" rx="3.4" ry="1.5" fill="#9a5644" stroke="#3e1d13" stroke-width="0.6"/>
<ellipse cx="612" cy="241.5" rx="2.7" ry="3.6" fill="#b77462" stroke="#3e1d13" stroke-width="0.8"/>
<ellipse cx="613" cy="241.8" rx="1.5" ry="2.5" fill="#f6f2f0"/>
<ellipse cx="612.3" cy="465.4" rx="2.6" ry="3.6" fill="#b77462" stroke="#3e1d13" stroke-width="0.8"/>
<ellipse cx="613.2" cy="465.7" rx="1.4" ry="2.4" fill="#efe2dd"/>
<path d="M501.3,238.3 L532.5,248.1 L553.3,260.6 L567.9,273.1 L580.4,286.7 L590.8,301.3 L599.6,317.0 L607.5,336.7 L614.0,353.3 L617.5,374.2 L619.2,395.0 L620.2,418.0 L602.5,418.0 L602.0,395.0 L600.4,374.2 L597.3,355.4 L591.0,336.7 L584.0,319.0 L576.3,303.3 L565.8,287.7 L553.3,272.0 L538.8,258.5 L522.0,248.0 L501.3,239.8 Z" fill="#1767c8" />
<path d="M501.3,238.3 L532.5,248.1 L553.3,260.6 L567.9,273.1 L580.4,286.7 L590.8,301.3 L599.6,317.0 L607.5,336.7 L614.0,353.3 L617.5,374.2 L619.2,395.0 L620.2,418.0 L620.2,418.0 L619.2,395.0 L616.1,374.2 L611.0,353.7 L602.5,336.7 L593.0,317.8 L583.5,302.3 L572.4,287.2 L559.9,272.5 L546.0,259.6 L528.8,248.1 L501.3,238.3 Z" fill="#0f54a8" />
<path d="M501.3,238.3 L532.5,248.1 L553.3,260.6 L567.9,273.1 L580.4,286.7 L590.8,301.3 L599.6,317.0 L607.5,336.7 L614.0,353.3 L617.5,374.2 L619.2,395.0 L620.2,418.0" fill="none" stroke="#3f95ea" stroke-width="0.9" />
<path d="M501.3,239.8 L522.0,248.0 L538.8,258.5 L553.3,272.0 L565.8,287.7 L576.3,303.3 L584.0,319.0 L591.0,336.7 L597.3,355.4 L600.4,374.2 L602.0,395.0 L602.5,418.0" fill="none" stroke="#3f95ea" stroke-width="0.9" />
<defs><linearGradient id="gsc" x1="0" y1="0" x2="0.6" y2="1"><stop offset="0" stop-color="#1f7ae6"/><stop offset="0.55" stop-color="#1568d0"/><stop offset="1" stop-color="#0c4da3"/></linearGradient></defs>
<path d="M602.5,417 L602.5,419.8 L591.9,418.3 C587,419 583.5,423 582,429 C580.8,436 583,442 588,446.5 C592,449.5 598,451.5 604,452.8 C609,453.5 613.5,451 616.5,447 C619.5,442.5 620.7,437 620.7,432 L620.5,420.4 L620.2,417 Z" fill="#1767c8" />
<path d="M602.5,417 L602.5,419.8 L591.9,418.3 C587,419 583.5,423 582,429 C580.8,436 583,442 588,446.5 C592,449.5 598,451.5 604,452.8 C609,453.5 613.5,451 616.5,447 C619.5,442.5 620.7,437 620.7,432 L620.5,420.4 L620.2,417" fill="none" stroke="#4a9cec" stroke-width="0.8" />
<path d="M591.9,418.3 L608.7,422.9 C604.5,426.5 600.2,432 599.7,438 C599.3,444 600.8,448.5 603.8,452.7 C598,451.5 592,449.5 588,446.5 C583,442 580.8,436 582,429 C583.5,423 587,419 591.9,418.3 Z" fill="url(#gsc)" stroke="#4a9cec" stroke-width="0.7" />
<path d="M602.6,415.3 L620.5,419.9 M603.6,430 L620.5,435.2" fill="none" stroke="#5aa6ea" stroke-width="0.6" />
<path d="M608.7,422.9 C604.5,426.5 600.2,432 599.7,438 C599.3,444 600.8,448.5 603.8,452.7" fill="none" stroke="#7fbdf0" stroke-width="0.8" />
<path d="M420,257.8 C419.5,263 424,268 431,270.8 C438,273.5 444,276.5 448.5,275.6 C453,274.5 457.5,267 458.8,261 C459.3,258.5 456,256.5 450,254.8 L442.5,254 Z" fill="#1670d8" stroke="#4a9cec" stroke-width="0.8" />
<path d="M420,257.8 C419.5,263 424,268 431,270.8 C434,272 437,273.3 439.6,274.3 C436.5,268 437,260 441.5,254.3 Z" fill="#1262c2" />
<path d="M441.5,254.5 C437,260 436.5,268 439.8,274.5" fill="none" stroke="#8cc4f2" stroke-width="0.7" />
<path d="M423,262 C425,266 430,269 436,271.5" fill="none" stroke="#0e56ad" stroke-width="1.2" />
<path d="M420.3,257 C420.5,250 424,245 430,242.5 C436,240 440,238.5 445,237.5 L457.5,235.7 L476,234.5 L501.3,238.3 M435,254.6 C436,250.5 438.5,248.5 440.5,248 C444,246.3 447,245.7 460,243.8 L476,241.3 L501.3,239.8 M430,242.5 L445,247 M445,237.5 L455,242.6 M423.5,248.5 C428,244.5 434,242.3 440,241.5 L452,239.2 L476,237.6 L492,238.5" fill="none" stroke="#86bfea" stroke-width="0.75" />
<line x1="242.3" y1="552" x2="242.3" y2="533" stroke="#2c8a2c" stroke-width="2.2"/>
<path d="M239.6,536 L242.3,530.5 L245,536 Z" fill="#2c8a2c" stroke="#333" stroke-width="0.4" />
<line x1="242.3" y1="552.5" x2="229" y2="555.6" stroke="#1d2fb5" stroke-width="2.4"/>
<path d="M231,553 L226.3,556.3 L231.5,558.2 Z" fill="#1d2fb5" />
<line x1="242.3" y1="552.5" x2="254" y2="555.3" stroke="#b5302a" stroke-width="2.2"/>
<path d="M252.5,553 L257.5,556 L252,558 Z" fill="#b5302a" />
<text x="240.2" y="528.6" font-size="7.5" fill="#555" textLength="4.6" lengthAdjust="spacingAndGlyphs" >Y</text>
<text x="222.0" y="559.8" font-size="7.5" fill="#3b82d8" textLength="3.8" lengthAdjust="spacingAndGlyphs" font-style="italic">Z</text>
<text x="258.3" y="560.0" font-size="7.5" fill="#d9837c" textLength="4.6" lengthAdjust="spacingAndGlyphs" >X</text>
<text x="220.4" y="591.0" font-size="10.5" fill="#222" font-weight="bold" textLength="42.5" lengthAdjust="spacingAndGlyphs" >*Dimetric</text>
<rect x="80.5" y="334.8" width="134.5" height="40.4" fill="#f6f6f6" stroke="#c2c2c2" stroke-width="0.9" />
<path d="M86.0,343.8 L90.7,341.3 L96.0,343.3 L96.0,349 L91.2,351.6 L86.0,349.4 Z" fill="#4a93cf" stroke="#2a6ea8" stroke-width="0.8" />
<path d="M86.0,343.8 L91.2,345.9 L96.0,343.3 M91.2,345.9 L91.2,351.6" fill="none" stroke="#b4d8f2" stroke-width="0.9" />
<path d="M86.3,344 L91.10000000000001,346 L91.10000000000001,351.3 L86.3,349.2 Z" fill="#3c84c2" />
<path d="M91,349 L96,343.5 L97.5,345 L92.5,350.5 L90.6,351 Z" fill="#e9a13a" stroke="#7a5a1a" stroke-width="0.5" />
<rect x="86.5" y="340.5" width="8" height="6" fill="none" stroke="#666" stroke-width="0.6" />
<path d="M103.6,342.6 L106.5,341 L109.6,342.3 L109.6,346 L106.7,347.6 L103.6,346.2 Z" fill="#3b82bf" stroke="#245b8c" stroke-width="0.6" />
<path d="M103.6,342.6 L106.7,343.9 L109.6,342.3 M106.7,343.9 L106.7,347.6" fill="none" stroke="#a9d0ee" stroke-width="0.6" />
<path d="M108.5,345.5 L111,348" fill="none" stroke="#222" stroke-width="1.1" />
<rect x="109.3" y="347.3" width="5.4" height="4.6" fill="#555" />
<rect x="110.3" y="348.3" width="1.4" height="1.2" fill="#eee" />
<rect x="112.4" y="348.3" width="1.4" height="1.2" fill="#eee" />
<rect x="110.3" y="350" width="1.4" height="1.2" fill="#eee" />
<path d="M85.5,364 Q91,358.5 96.8,364 Q91,369 85.5,364 Z" fill="#ececec" stroke="#9a9a9a" stroke-width="0.8" />
<circle cx="91" cy="363.8" r="1.8" fill="#aaa"/>
<line x1="86.5" y1="359.5" x2="96" y2="368.5" stroke="#8a8a8a" stroke-width="0.9"/>
<circle cx="111.4" cy="362" r="3.8" fill="#f4f4f4" stroke="#666" stroke-width="1"/>
<path d="M109.8,361 L113,361 M109.8,363 L113,363" fill="none" stroke="#666" stroke-width="0.7" />
<line x1="108.6" y1="365" x2="104.6" y2="369" stroke="#3b82bf" stroke-width="2"/>
<path d="M121.8,366.5 L126.5,364.3 L133.7,366.2 L129,369 Z" fill="#5da3d8" stroke="#3878ad" stroke-width="0.5" />
<line x1="127.6" y1="359" x2="127.6" y2="366" stroke="#333" stroke-width="1"/>
<path d="M125.9,360.6 L127.6,357.6 L129.3,360.6 Z" fill="#333" />
<circle cx="145" cy="363" r="5.2" fill="#d9433a"/>
<path d="M145,363 L145,357.8 A5.2,5.2 0 0 0 139.8,363 Z" fill="#3b82bf" />
<path d="M145,363 L139.8,363 A5.2,5.2 0 0 0 146.8,367.9 Z" fill="#3da445" />
<path d="M144.5,366.5 L151.5,363.3 L152,366 L147,369.8 Z" fill="#e9b23a" stroke="#a97a1f" stroke-width="0.4" />
<path d="M157.0,363.6 L159.8,363.6 L158.4,365.7 Z" fill="#444" />
<rect x="80.7" y="382.4" width="137.3" height="208" fill="#f8f8f8" stroke="#c2c2c2" stroke-width="0.9" />
<text x="82.6" y="394.5" font-size="9.4" fill="#1a1a1a" font-weight="bold" textLength="20.5" lengthAdjust="spacingAndGlyphs" stroke="#1a1a1a" stroke-width="0.25">Body</text>
<line x1="81.2" y1="398.5" x2="217.5" y2="398.5" stroke="#dcdcdc" stroke-width="1"/>
<text x="107.6" y="409.9" font-size="9.0" fill="#282828" textLength="27.2" lengthAdjust="spacingAndGlyphs" >Flatten</text>
<line x1="107.6" y1="411.20000000000005" x2="113.03471682682478" y2="411.20000000000005" stroke="#333" stroke-width="0.7"/>
<path d="M84,406.5 L90,403.5 L95,407.1 L89,410.5 Z" fill="#f8f8f8" stroke="#6f6f6f" stroke-width="0.8" />
<path d="M86,405.5 L91,409.5 M88,404.5 L93,408.5" fill="none" stroke="#6f6f6f" stroke-width="0.6" />
<text x="107.6" y="424.9" font-size="9.0" fill="#282828" textLength="87.9" lengthAdjust="spacingAndGlyphs" >Create Sub-Weldment</text>
<line x1="107.6" y1="426.20000000000005" x2="114.02878979682258" y2="426.20000000000005" stroke="#333" stroke-width="0.7"/>
<text x="107.6" y="440.1" font-size="9.0" fill="#282828" textLength="26.2" lengthAdjust="spacingAndGlyphs" >Isolate</text>
<line x1="107.6" y1="441.40000000000003" x2="110.07062317687615" y2="441.40000000000003" stroke="#333" stroke-width="0.7"/>
<rect x="83.3" y="443.4" width="129.2" height="16.3" fill="#fefefe" stroke="#c1442b" stroke-width="2.2" />
<text x="107.6" y="454.6" font-size="9.0" fill="#282828" textLength="32.6" lengthAdjust="spacingAndGlyphs" >Material</text>
<path d="M206.85000000000002,449.6 L209.70000000000002,451.5 L206.85000000000002,453.4 Z" fill="#555" />
<text x="107.6" y="469.6" font-size="9.0" fill="#282828" textLength="51.9" lengthAdjust="spacingAndGlyphs" >Body Display</text>
<path d="M206.85000000000002,464.6 L209.70000000000002,466.5 L206.85000000000002,468.4 Z" fill="#555" />
<text x="107.6" y="485.0" font-size="9.0" fill="#282828" textLength="78.4" lengthAdjust="spacingAndGlyphs" >Delete/Keep Body...</text>
<line x1="107.6" y1="486.3" x2="114.01955816961042" y2="486.3" stroke="#333" stroke-width="0.7"/>
<path d="M85.3,478.8 L90,476.3 L95.3,478.3 L95.3,484 L90.5,486.6 L85.3,484.4 Z" fill="#4a93cf" stroke="#2a6ea8" stroke-width="0.8" />
<path d="M85.3,478.8 L90.5,480.9 L95.3,478.3 M90.5,480.9 L90.5,486.6" fill="none" stroke="#b4d8f2" stroke-width="0.9" />
<path d="M85.6,479 L90.4,481 L90.4,486.3 L85.6,484.2 Z" fill="#3c84c2" />
<path d="M92.5,484 L95.5,487 M95.5,484 L92.5,487" fill="none" stroke="#222" stroke-width="1.1" />
<text x="107.6" y="499.8" font-size="9.0" fill="#282828" textLength="82.6" lengthAdjust="spacingAndGlyphs" >Insert into New Part...</text>
<line x1="109.98680990070045" y1="501.1" x2="114.76445694040402" y2="501.1" stroke="#333" stroke-width="0.7"/>
<text x="107.6" y="514.9" font-size="9.0" fill="#282828" textLength="57.4" lengthAdjust="spacingAndGlyphs" >Save Selection</text>
<path d="M206.85000000000002,509.90000000000003 L209.70000000000002,511.8 L206.85000000000002,513.7 Z" fill="#555" />
<text x="107.6" y="529.8" font-size="9.0" fill="#282828" textLength="83.8" lengthAdjust="spacingAndGlyphs" >Change Transparency</text>
<line x1="127.9607635745708" y1="531.1" x2="132.69727952737148" y2="531.1" stroke="#333" stroke-width="0.7"/>
<g opacity="0.6">
<path d="M86.5,524.8 L90.3,521.0 L94.1,521.9 L94.3,524.3 L97,525.7 L96.5,528.6 L93.1,531.0 L88.4,527.6 Z" fill="#efb42f" stroke="#c9871a" stroke-width="0.8" stroke-linejoin="round"/>
<path d="M87.2,524.9 L90.4,521.8 L93.4,522.5 L90.6,525.5 Z" fill="#f7cf63" />
<path d="M90.6,525.7 L(94,),524.7 L96.2,526.0 L(93,),529.1 Z" fill="#f4c650" />
<circle cx="86.7" cy="524.8" r="0.55" fill="#d24a2a"/>
<circle cx="90.3" cy="521.3" r="0.55" fill="#d24a2a"/>
<circle cx="93.1" cy="530.6" r="0.55" fill="#d24a2a"/>
<circle cx="96.5" cy="528.3" r="0.55" fill="#d24a2a"/>
<circle cx="88.6" cy="527.5" r="0.55" fill="#d24a2a"/>
</g>
<path d="M84.5,528 Q88.5,524.5 92.5,528 Q88.5,531.5 84.5,528 Z" fill="#444" stroke="#222" stroke-width="0.4" />
<circle cx="88.5" cy="528" r="1.1" fill="#eee"/>
<line x1="81.2" y1="534.2" x2="217.5" y2="534.2" stroke="#dcdcdc" stroke-width="1"/>
<text x="82.5" y="545.2" font-size="9.2" fill="#1a1a1a" font-weight="bold" textLength="97.2" lengthAdjust="spacingAndGlyphs" stroke="#1a1a1a" stroke-width="0.3">Feature (Base-Flange2)</text>
<line x1="81.2" y1="548.6" x2="217.5" y2="548.6" stroke="#dcdcdc" stroke-width="1"/>
<text x="107.6" y="560.5" font-size="9.0" fill="#282828" textLength="53.9" lengthAdjust="spacingAndGlyphs" >Parent/Child...</text>
<line x1="107.6" y1="561.8" x2="113.27431382703261" y2="561.8" stroke="#333" stroke-width="0.7"/>
<text x="107.6" y="576.3" font-size="9.0" fill="#282828" textLength="57.9" lengthAdjust="spacingAndGlyphs" >Collapse Items</text>
<line x1="120.7364574965742" y1="577.6" x2="122.68168737891602" y2="577.6" stroke="#333" stroke-width="0.7"/>
<text x="107.6" y="590.0" font-size="9.0" fill="#282828" textLength="66.0" lengthAdjust="spacingAndGlyphs" >Rename tree item</text>
<line x1="107.6" y1="591.3" x2="113.597640674767" y2="591.3" stroke="#333" stroke-width="0.7"/>
<rect x="215.8" y="268.6" width="138.4" height="191" fill="#f8f8f8" stroke="#c1442b" stroke-width="2.8" />
<text x="242.8" y="282.7" font-size="9.0" fill="#282828" textLength="51.0" lengthAdjust="spacingAndGlyphs" >Edit Material</text>
<line x1="242.8" y1="284.00000000000006" x2="248.92137655692076" y2="284.00000000000006" stroke="#333" stroke-width="0.7"/>
<line x1="223.2" y1="275.6" x2="230.4" y2="275.6" stroke="#444" stroke-width="1.1"/>
<line x1="223.2" y1="278.90000000000003" x2="230.4" y2="278.90000000000003" stroke="#444" stroke-width="1.1"/>
<line x1="223.2" y1="282.3" x2="230.4" y2="282.3" stroke="#444" stroke-width="1.1"/>
<rect x="219.9" y="274.6" width="2.2" height="2" fill="#e9a13a" />
<rect x="219.9" y="278.0" width="2.2" height="2" fill="#3b82bf" />
<line x1="219.9" y1="282.3" x2="226.6" y2="282.3" stroke="#444" stroke-width="1.1"/>
<circle cx="228.2" cy="282.6" r="2" fill="#333"/>
<text x="242.8" y="298.1" font-size="9.0" fill="#282828" textLength="69.5" lengthAdjust="spacingAndGlyphs" >Manage Favorites</text>
<line x1="250.03344917123837" y1="299.40000000000003" x2="254.8625329454716" y2="299.40000000000003" stroke="#333" stroke-width="0.7"/>
<line x1="224" y1="303" x2="345" y2="303" stroke="#d6d6d6" stroke-width="1"/>
<text x="242.8" y="314.1" font-size="9.0" fill="#282828" textLength="72.0" lengthAdjust="spacingAndGlyphs" >Plain Carbon Steel</text>
<line x1="242.8" y1="315.40000000000003" x2="248.55994603002082" y2="315.40000000000003" stroke="#333" stroke-width="0.7"/>
<text x="242.8" y="329.4" font-size="9.0" fill="#282828" textLength="42.0" lengthAdjust="spacingAndGlyphs" >1060 Alloy</text>
<line x1="242.8" y1="330.70000000000005" x2="247.86138895472862" y2="330.70000000000005" stroke="#333" stroke-width="0.7"/>
<text x="242.8" y="344.4" font-size="9.0" fill="#282828" textLength="70.6" lengthAdjust="spacingAndGlyphs" >Aluminum Bronze</text>
<line x1="248.76731938147188" y1="345.70000000000005" x2="250.75502801591858" y2="345.70000000000005" stroke="#333" stroke-width="0.7"/>
<text x="242.8" y="359.4" font-size="9.0" fill="#282828" textLength="61.3" lengthAdjust="spacingAndGlyphs" >Cast Alloy Steel</text>
<line x1="242.8" y1="360.70000000000005" x2="249.12133598090182" y2="360.70000000000005" stroke="#333" stroke-width="0.7"/>
<text x="242.8" y="374.3" font-size="9.0" fill="#282828" textLength="20.3" lengthAdjust="spacingAndGlyphs" >Brass</text>
<line x1="242.8" y1="375.6" x2="248.09743260590503" y2="375.6" stroke="#333" stroke-width="0.7"/>
<text x="242.8" y="389.7" font-size="9.0" fill="#282828" textLength="29.2" lengthAdjust="spacingAndGlyphs" >Copper</text>
<line x1="249.23014912573254" y1="391.00000000000006" x2="254.1814474248416" y2="391.00000000000006" stroke="#333" stroke-width="0.7"/>
<text x="242.8" y="404.6" font-size="9.0" fill="#282828" textLength="81.3" lengthAdjust="spacingAndGlyphs" >PBT General Purpose</text>
<line x1="253.908007681229" y1="405.90000000000003" x2="258.9936485837734" y2="405.90000000000003" stroke="#333" stroke-width="0.7"/>
<text x="242.8" y="419.6" font-size="9.0" fill="#282828" textLength="23.9" lengthAdjust="spacingAndGlyphs" >Nickel</text>
<line x1="242.8" y1="420.90000000000003" x2="249.13950071736014" y2="420.90000000000003" stroke="#333" stroke-width="0.7"/>
<line x1="224" y1="424.4" x2="345" y2="424.4" stroke="#d6d6d6" stroke-width="1"/>
<text x="242.8" y="436.0" font-size="9.0" fill="#282828" textLength="93.4" lengthAdjust="spacingAndGlyphs" >Hide/Show Tree Items...</text>
<line x1="242.8" y1="437.3" x2="249.1214936301069" y2="437.3" stroke="#333" stroke-width="0.7"/>
<text x="242.8" y="451.3" font-size="9.0" fill="#282828" textLength="66.0" lengthAdjust="spacingAndGlyphs" >Customize Menu</text>
<line x1="286.7963345551483" y1="452.6" x2="294.1240169943352" y2="452.6" stroke="#333" stroke-width="0.7"/>
</svg>
</body></html>
